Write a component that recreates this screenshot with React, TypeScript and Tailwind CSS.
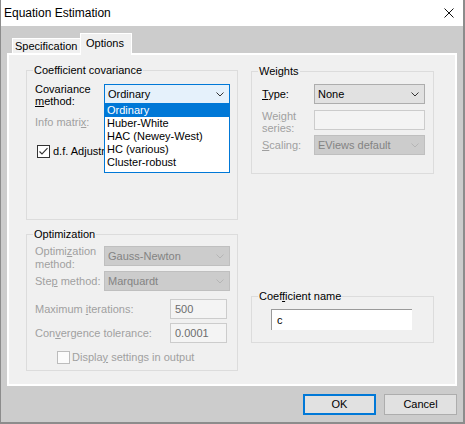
import React from 'react';

type ComboVariant = 'focused' | 'normal' | 'disabled';

const comboStyles: Record<ComboVariant, string> = {
  focused: 'bg-[#e5f1fb] border-[#0078d7] text-black',
  normal: 'bg-[#e1e1e1] border-[#adadad] text-black',
  disabled: 'bg-[#cccccc] border-[#bfbfbf] text-[#838383]',
};

const Chevron = ({ color }: { color: string }) => (
  <svg width="8" height="5" viewBox="0 0 8 5" className="shrink-0">
    <path d="M0.5 0.5 L4 4 L7.5 0.5" fill="none" stroke={color} strokeWidth="1" />
  </svg>
);

const Combo = ({
  value,
  variant = 'normal',
  className = '',
  children,
}: {
  value: string;
  variant?: ComboVariant;
  className?: string;
  children?: React.ReactNode;
}) => (
  <div
    className={`relative flex items-center justify-between h-[20px] border pl-[3px] pr-[5px] ${comboStyles[variant]} ${className}`}
  >
    <span className="leading-[13px]">{value}</span>
    <Chevron color={variant === 'disabled' ? '#b5b5b5' : '#333333'} />
    {children}
  </div>
);

const Edit = ({ value, disabled, className = '' }: { value: string; disabled?: boolean; className?: string }) => (
  <div
    className={`flex items-center h-[20px] pl-[4px] leading-[13px] ${
      disabled ? 'bg-[#f4f4f4] border border-[#cccccc] text-[#6d6d6d]' : 'bg-white border-t border-l border-[#9a9a9a] text-black'
    } ${className}`}
  >
    {value}
  </div>
);

const CheckBox = ({ checked, disabled }: { checked?: boolean; disabled?: boolean }) => (
  <div
    className={`w-[13px] h-[13px] shrink-0 flex items-center justify-center border ${
      disabled ? 'bg-[#fbfbfb] border-[#bcbcbc]' : 'bg-white border-[#333333]'
    }`}
  >
    {checked && (
      <svg width="11" height="11" viewBox="0 0 11 11">
        <path d="M1.5 5.5 L4 8 L9.5 2.2" fill="none" stroke="#333333" strokeWidth="1.1" />
      </svg>
    )}
  </div>
);

// group box with its caption sitting on the top border
const GroupBox = ({
  title,
  className = '',
  children,
}: {
  title: React.ReactNode;
  className?: string;
  children: React.ReactNode;
}) => (
  <div className={`relative border border-[#dcdcdc] ${className}`}>
    <span className="absolute -top-[7px] left-[6px] px-[1px] bg-[#f0f0f0] leading-[13px] text-black">{title}</span>
    {children}
  </div>
);

const covarianceMethods = ['Ordinary', 'Huber-White', 'HAC (Newey-West)', 'HC (various)', 'Cluster-robust'];

const gray = 'text-[#a0a0a0]';

export default function App() {
  return (
    <div className="w-[465px] h-[424px] flex flex-col bg-[#cccccc] border-l border-r-2 border-b-2 border-[#8c8c8c] font-['Liberation_Sans',Arial,sans-serif] text-[11px] text-black select-none">
      {/* Title bar */}
      <div className="h-[26px] shrink-0 bg-white flex items-center justify-between pl-[3px] pr-[9px]">
        <span className="text-[12px] leading-[14px]">Equation Estimation</span>
        <svg width="10" height="10" viewBox="0 0 10 10">
          <path d="M0.5 0.5 L9.5 9.5 M9.5 0.5 L0.5 9.5" stroke="#111111" strokeWidth="1" />
        </svg>
      </div>

      {/* Tabs */}
      <div className="mt-[7px] h-[20px] flex items-end pl-[11px]">
        <div className="h-[15px] w-[68px] flex items-center pl-[2px] bg-[#f0f0f0] border-l border-t border-white">
          <span className="leading-[13px]">Specification</span>
        </div>
        <div className="relative z-10 h-[22px] -mb-[2px] w-[52px] flex items-start pt-[3px] pl-[5px] bg-[#f0f0f0] border-l border-t border-r border-white">
          <span className="leading-[13px]">Options</span>
        </div>
      </div>

      {/* Tab page */}
      <div className="ml-[6px] w-[450px] h-[333px] shrink-0 bg-[#f0f0f0] border-2 border-white">
        <div className="flex gap-[13px] pl-[17px]">
          {/* Left column */}
          <div className="w-[212px] flex flex-col">
            <GroupBox title="Coefficient covariance" className="mt-[15px] h-[150px]">
              <div className="pl-[8px] pt-[13px]">
                <div className="flex items-start h-[26px]">
                  <div className="w-[69px] leading-[12px] -mt-px">
                    Covariance
                    <br />
                    <u>m</u>ethod:
                  </div>
                  <Combo value="Ordinary" variant="focused" className="w-[126px] z-20">
                    {/* open drop-down list, drawn over the rows below */}
                    <div className="absolute left-[-1px] top-[18px] w-[126px] bg-white border border-[#0078d7] pb-[3px]">
                      {covarianceMethods.map((m, i) => (
                        <div
                          key={m}
                          className={`h-[13px] pl-[2px] leading-[13px] ${i === 0 ? 'bg-[#0078d7] text-white' : 'text-black'}`}
                        >
                          {m}
                        </div>
                      ))}
                    </div>
                  </Combo>
                </div>
                <div className="flex items-center h-[20px] mt-[2px]">
                  <div className={`w-[69px] leading-[13px] ${gray}`}>
                    Info matri<u>x</u>:
                  </div>
                  <Combo value="" className="w-[126px]" />
                </div>
                <div className="flex items-center h-[13px] mt-[13px] ml-[2px]">
                  <CheckBox checked />
                  <span className="ml-[3px] whitespace-nowrap leading-[13px]">d.f. Adjustment</span>
                </div>
              </div>
            </GroupBox>

            <GroupBox title="Optimization" className="mt-[14px] h-[137px]">
              <div className="pl-[8px] pt-[10px]">
                <div className="flex items-start h-[26px]">
                  <div className={`w-[69px] leading-[13px] ${gray}`}>
                    Optimi<u>z</u>ation
                    <br />
                    method:
                  </div>
                  <Combo value="Gauss-Newton" variant="disabled" className="w-[126px] mt-[1px]" />
                </div>
                <div className="flex items-center h-[20px]">
                  <div className={`w-[69px] leading-[13px] ${gray}`}>
                    Ste<u>p</u> method:
                  </div>
                  <Combo value="Marquardt" variant="disabled" className="w-[126px]" />
                </div>
                <div className="flex items-center h-[20px] mt-[8px]">
                  <div className={`w-[135px] leading-[13px] ${gray}`}>
                    Maximum <u>i</u>terations:
                  </div>
                  <Edit value="500" disabled className="w-[57px]" />
                </div>
                <div className="flex items-center h-[20px] mt-[4px]">
                  <div className={`w-[135px] leading-[13px] ${gray}`}>
                    Con<u>v</u>ergence tolerance:
                  </div>
                  <Edit value="0.0001" disabled className="w-[57px]" />
                </div>
                <div className="flex items-center h-[13px] mt-[8px] ml-[22px]">
                  <CheckBox disabled />
                  <span className={`ml-[2px] leading-[13px] ${gray}`}>
                    Displa<u>y</u> settings in output
                  </span>
                </div>
              </div>
            </GroupBox>
          </div>

          {/* Right column */}
          <div className="w-[183px] flex flex-col">
            <GroupBox title="Weights" className="mt-[16px] h-[103px]">
              <div className="pl-[10px] pt-[12px]">
                <div className="flex items-center h-[20px]">
                  <div className="w-[52px] leading-[13px]">
                    <u>T</u>ype:
                  </div>
                  <Combo value="None" className="w-[111px]" />
                </div>
                <div className="flex items-start h-[20px] mt-[6px]">
                  <div className={`w-[52px] leading-[12px] ${gray}`}>
                    Wei<u>g</u>ht
                    <br />
                    series:
                  </div>
                  <Edit value="" disabled className="w-[111px]" />
                </div>
                <div className="flex items-center h-[20px] mt-[5px]">
                  <div className={`w-[52px] leading-[13px] ${gray}`}>
                    <u>S</u>caling:
                  </div>
                  <Combo value="EViews default" variant="disabled" className="w-[111px]" />
                </div>
              </div>
            </GroupBox>

            <GroupBox
              title={
                <>
                  Coef<u>f</u>icient name
                </>
              }
              className="mt-[122px] h-[47px]"
            >
              <div className="pl-[19px] pt-[12px]">
                <Edit value="c" className="w-[141px] h-[21px] pl-[5px]" />
              </div>
            </GroupBox>
          </div>
        </div>
      </div>

      {/* Buttons */}
      <div className="mt-[8px] flex justify-end gap-[8px] pr-[6px]">
        <button className="w-[73px] h-[21px] bg-[#e1e1e1] border-2 border-[#0078d7] leading-[13px]">OK</button>
        <button className="w-[73px] h-[21px] bg-[#e1e1e1] border border-[#adadad] leading-[13px]">Cancel</button>
      </div>
    </div>
  );
}
